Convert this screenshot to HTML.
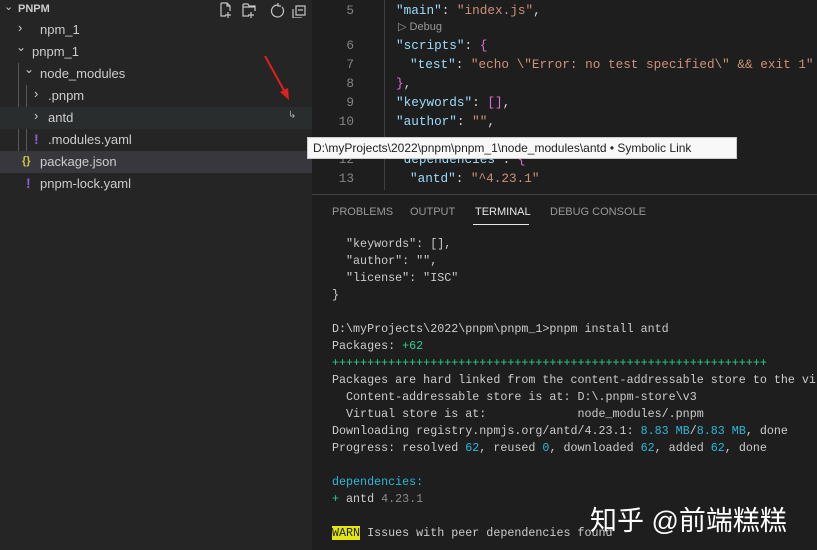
<!DOCTYPE html>
<html><head><meta charset="utf-8"><style>
*{margin:0;padding:0;box-sizing:border-box}
body{width:817px;height:550px;overflow:hidden;background:#1e1e1e;position:relative;font-family:"Liberation Sans",sans-serif}
.abs{position:absolute;white-space:pre}
#side{position:absolute;left:0;top:0;width:312px;height:550px;background:#252526}
.row{position:absolute;left:0;width:312px;height:22px;line-height:22px;color:#cccccc;font-size:13px;white-space:pre}
.ed{position:absolute;font-family:"Liberation Mono",monospace;font-size:12.7px;color:#d4d4d4;white-space:pre;line-height:19px}
.ln{position:absolute;font-family:"Liberation Mono",monospace;font-size:12.7px;color:#858585;width:30px;text-align:right;left:324px;line-height:19px}
.k{color:#9cdcfe}.s{color:#ce9178}.b{color:#da70d6}.y{color:#ffd700}
.t{position:absolute;left:332px;width:485px;overflow:hidden;font-family:"Liberation Mono",monospace;font-size:11.7px;color:#cccccc;white-space:pre;line-height:17px}
.g{color:#23d18b}.c{color:#29b8db}.gr{color:#8a8a8a}
</style></head><body>
<div id="side">
 <div class="row" style="top:-2px;font-weight:bold;font-size:11px;padding-left:18px">PNPM</div>
 <div class="abs" style="left:4px;top:0;color:#ccc;font-size:11px">⌄</div>
 <svg class="abs" style="left:218px;top:2px" width="90" height="16" fill="none" stroke="#c5c5c5" stroke-width="1.2">
  <path d="M3 1h6l3 3v5M3 1v13h5M9 1v3h3M10 10v6M7 13h6"/>
  <path d="M25 2h5l1 2h6v5M25 2v12h6M25 5h12M33 10v6M30 13h6"/>
  <path d="M60 3a6 6 0 1 0 4 2M60 1v3h3"/>
  <path d="M78 4h9v9h-9zM75 7v9h9M80 8h5"/>
 </svg>
 <div class="row" style="top:19px;padding-left:40px">npm_1</div>
 <div class="abs" style="left:18px;top:20px;color:#ccc;font-size:13px">›</div>
 <div class="row" style="top:41px;padding-left:32px">pnpm_1</div>
 <div class="abs" style="left:16px;top:40px;color:#ccc;font-size:12px">⌄</div>
 <div class="abs" style="left:18px;top:63px;width:1px;height:110px;background:#585858"></div>
 <div class="row" style="top:63px;padding-left:40px">node_modules</div>
 <div class="abs" style="left:24px;top:62px;color:#ccc;font-size:12px">⌄</div>
 <div class="abs" style="left:26px;top:85px;width:1px;height:66px;background:#585858"></div>
 <div class="row" style="top:85px;padding-left:48px">.pnpm</div>
 <div class="abs" style="left:34px;top:86px;color:#ccc;font-size:13px">›</div>
 <div class="row" style="top:107px;padding-left:48px;background:#2a2d2e">antd</div>
 <div class="abs" style="left:34px;top:108px;color:#ccc;font-size:13px">›</div>
 <div class="abs" style="left:288px;top:110px;color:#aaa;font-size:10px">↳</div>
 <div class="row" style="top:129px;padding-left:48px">.modules.yaml</div>
 <div class="abs" style="left:34px;top:131px;color:#8d5dd6;font-size:14px;font-weight:bold">!</div>
 <div class="row" style="top:151px;padding-left:40px;background:#37373d">package.json</div>
 <div class="abs" style="left:22px;top:155px;color:#cbcb41;font-size:11px;font-weight:bold">{}</div>
 <div class="row" style="top:173px;padding-left:40px">pnpm-lock.yaml</div>
 <div class="abs" style="left:26px;top:175px;color:#8d5dd6;font-size:14px;font-weight:bold">!</div>
 <svg class="abs" style="left:262px;top:54px" width="30" height="50"><path d="M3 2L24 40" stroke="#e0201e" stroke-width="2"/><path d="M18 38l9 8-1-12z" fill="#e0201e"/></svg>
</div>
<div class="abs" style="left:384px;top:0;width:1px;height:190px;background:#404040"></div>
<div class="ln" style="top:1px">5</div><div class="ed" style="left:396px;top:1px"><span class="k">"main"</span>: <span class="s">"index.js"</span>,</div>
<div class="abs" style="left:398px;top:20px;color:#999;font-size:11px">▷ Debug</div>
<div class="ln" style="top:36px">6</div><div class="ed" style="left:396px;top:36px"><span class="k">"scripts"</span>: <span class="b">{</span></div>
<div class="ln" style="top:55px">7</div><div class="ed" style="left:410px;top:55px"><span class="k">"test"</span>: <span class="s">"echo \"Error: no test specified\" &amp;&amp; exit 1"</span></div>
<div class="ln" style="top:74px">8</div><div class="ed" style="left:396px;top:74px"><span class="b">}</span>,</div>
<div class="ln" style="top:93px">9</div><div class="ed" style="left:396px;top:93px"><span class="k">"keywords"</span>: <span class="b">[]</span>,</div>
<div class="ln" style="top:112px">10</div><div class="ed" style="left:396px;top:112px"><span class="k">"author"</span>: <span class="s">""</span>,</div>
<div class="ln" style="top:150px">12</div><div class="ed" style="left:396px;top:150px"><span class="k">"dependencies"</span>: <span class="b">{</span></div>
<div class="ln" style="top:169px">13</div><div class="ed" style="left:410px;top:169px"><span class="k">"antd"</span>: <span class="s">"^4.23.1"</span></div>
<div class="abs" style="left:307px;top:137px;width:430px;height:22px;background:#f8f8f8;border:1px solid #ccc;color:#222;font-size:12px;line-height:20px;padding-left:5px">D:\myProjects\2022\pnpm\pnpm_1\node_modules\antd • Symbolic Link</div>
<div class="abs" style="left:312px;top:194px;width:505px;height:356px;background:#1e1e1e;border-top:1px solid #414141"></div>
<div class="abs" style="left:332px;top:206px;font-size:11px;color:#999">PROBLEMS</div>
<div class="abs" style="left:410px;top:206px;font-size:11px;color:#999">OUTPUT</div>
<div class="abs" style="left:475px;top:206px;font-size:11px;color:#e7e7e7">TERMINAL</div>
<div class="abs" style="left:473px;top:224px;width:56px;height:1px;background:#e7e7e7"></div>
<div class="abs" style="left:550px;top:206px;font-size:11px;color:#999">DEBUG CONSOLE</div>
<div class="t" style="top:236px">  "keywords": [],
  "author": "",
  "license": "ISC"
}

D:\myProjects\2022\pnpm\pnpm_1>pnpm install antd
Packages: <span class="g">+62</span>
<span class="g">++++++++++++++++++++++++++++++++++++++++++++++++++++++++++++++</span>
Packages are hard linked from the content-addressable store to the vi
  Content-addressable store is at: D:\.pnpm-store\v3
  Virtual store is at:             node_modules/.pnpm
Downloading registry.npmjs.org/antd/4.23.1: <span class="c">8.83 MB</span>/<span class="c">8.83 MB</span>, done
Progress: resolved <span class="c">62</span>, reused <span class="c">0</span>, downloaded <span class="c">62</span>, added <span class="c">62</span>, done

<span class="c">dependencies:</span>
<span class="g">+</span> antd <span class="gr">4.23.1</span>

<span style="background:#e5e510;color:#1e1e1e">WARN</span> Issues with peer dependencies found</div>
<div class="abs" style="left:590px;top:499px;color:#fff;font-size:27px;font-family:'Liberation Sans','Noto Sans CJK SC',sans-serif">知乎 @前端糕糕</div>
</body></html>
